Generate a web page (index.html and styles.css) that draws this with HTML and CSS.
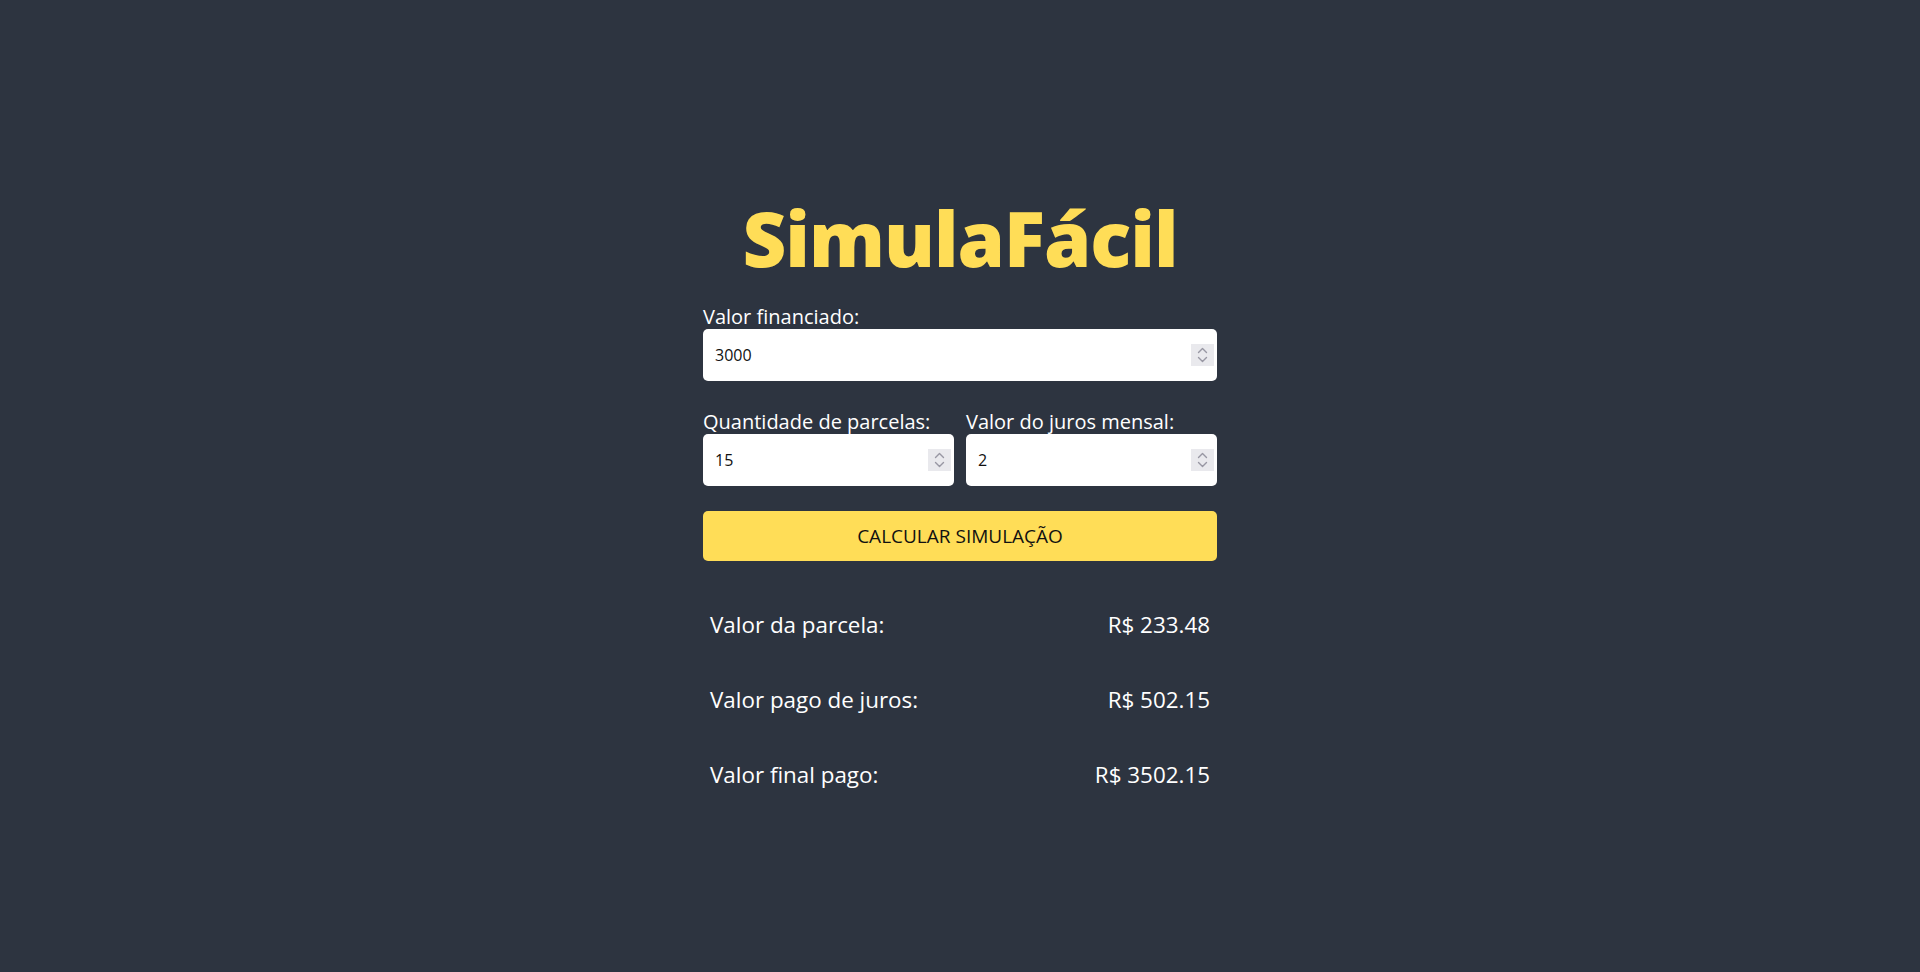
FILE: index.html
```html
<!DOCTYPE html>
<html lang="pt-BR">
<head>
<meta charset="utf-8">
<title>SimulaFácil</title>
<link rel="stylesheet" href="styles.css">
</head>
<body>
<main class="page">
  <div class="wrap">
    <h1 class="title">SimulaFácil</h1>
    <form class="form">
      <div class="field">
        <label class="label" for="valor">Valor financiado:</label>
        <div class="control">
          <input class="input" id="valor" type="number" value="3000">
          <span class="spin" aria-hidden="true"><svg viewBox="0 0 23 22" width="23" height="22"><path d="M7.5 8.5 L11.5 4.5 L15.5 8.5 M7.5 13.5 L11.5 17.5 L15.5 13.5" fill="none" stroke="#9897a3" stroke-width="1.4" stroke-linecap="round" stroke-linejoin="round"/></svg></span>
        </div>
      </div>
      <div class="row">
        <div class="field">
          <label class="label" for="parcelas">Quantidade de parcelas:</label>
          <div class="control">
            <input class="input" id="parcelas" type="number" value="15">
            <span class="spin" aria-hidden="true"><svg viewBox="0 0 23 22" width="23" height="22"><path d="M7.5 8.5 L11.5 4.5 L15.5 8.5 M7.5 13.5 L11.5 17.5 L15.5 13.5" fill="none" stroke="#9897a3" stroke-width="1.4" stroke-linecap="round" stroke-linejoin="round"/></svg></span>
          </div>
        </div>
        <div class="field">
          <label class="label" for="juros">Valor do juros mensal:</label>
          <div class="control">
            <input class="input" id="juros" type="number" value="2">
            <span class="spin" aria-hidden="true"><svg viewBox="0 0 23 22" width="23" height="22"><path d="M7.5 8.5 L11.5 4.5 L15.5 8.5 M7.5 13.5 L11.5 17.5 L15.5 13.5" fill="none" stroke="#9897a3" stroke-width="1.4" stroke-linecap="round" stroke-linejoin="round"/></svg></span>
          </div>
        </div>
      </div>
      <button class="button" type="button">CALCULAR SIMULAÇÃO</button>
    </form>
    <div class="results">
      <div class="result"><span>Valor da parcela:</span><span>R$ 233.48</span></div>
      <div class="result"><span>Valor pago de juros:</span><span>R$ 502.15</span></div>
      <div class="result"><span>Valor final pago:</span><span>R$ 3502.15</span></div>
    </div>
  </div>
</main>
</body>
</html>
```

FILE: styles.css
```css
* { box-sizing: border-box; }
html, body { margin: 0; height: 100%; }
body {
  background: #2d3440;
  font-family: "Open Sans", "Noto Sans", sans-serif;
  color: #ffffff;
}
.page {
  display: flex;
  justify-content: center;
  padding-top: 188px;
}
.wrap {
  width: 514px;
  display: flex;
  flex-direction: column;
}
.title {
  margin: 0 0 16px;
  text-align: center;
  font-size: 76px;
  line-height: 100px;
  font-weight: 800;
  letter-spacing: -1px;
  color: #ffdd57;
  white-space: nowrap;
}
.form {
  display: flex;
  flex-direction: column;
}
.field {
  display: flex;
  flex-direction: column;
  flex: 1;
  min-width: 0;
}
.label {
  font-size: 20px;
  line-height: 25px;
  color: #ffffff;
}
.control {
  position: relative;
  display: flex;
}
.input {
  width: 100%;
  height: 52px;
  border: none;
  border-radius: 5px;
  background: #ffffff;
  padding: 0 30px 0 12px;
  font-family: "Open Sans", sans-serif;
  font-size: 16px;
  color: #111;
  outline: none;
  -moz-appearance: textfield;
}
.input::-webkit-inner-spin-button,
.input::-webkit-outer-spin-button {
  -webkit-appearance: none;
  margin: 0;
}
.spin {
  position: absolute;
  right: 3px;
  top: 15px;
  width: 23px;
  height: 22px;
  background: #e9e9ed;
  display: flex;
}
.row {
  display: flex;
  gap: 12px;
  margin-top: 28px;
}
.button {
  margin-top: 25px;
  height: 50px;
  border: none;
  border-radius: 5px;
  background: #ffdd57;
  color: #111;
  font-family: "Open Sans", sans-serif;
  font-size: 19px;
  cursor: pointer;
}
.results {
  padding: 27px 7px 0 7px;
  display: flex;
  flex-direction: column;
}
.result {
  display: flex;
  justify-content: space-between;
  font-size: 22.4px;
  line-height: 30px;
  padding: 22px 0 23px;
}
```
